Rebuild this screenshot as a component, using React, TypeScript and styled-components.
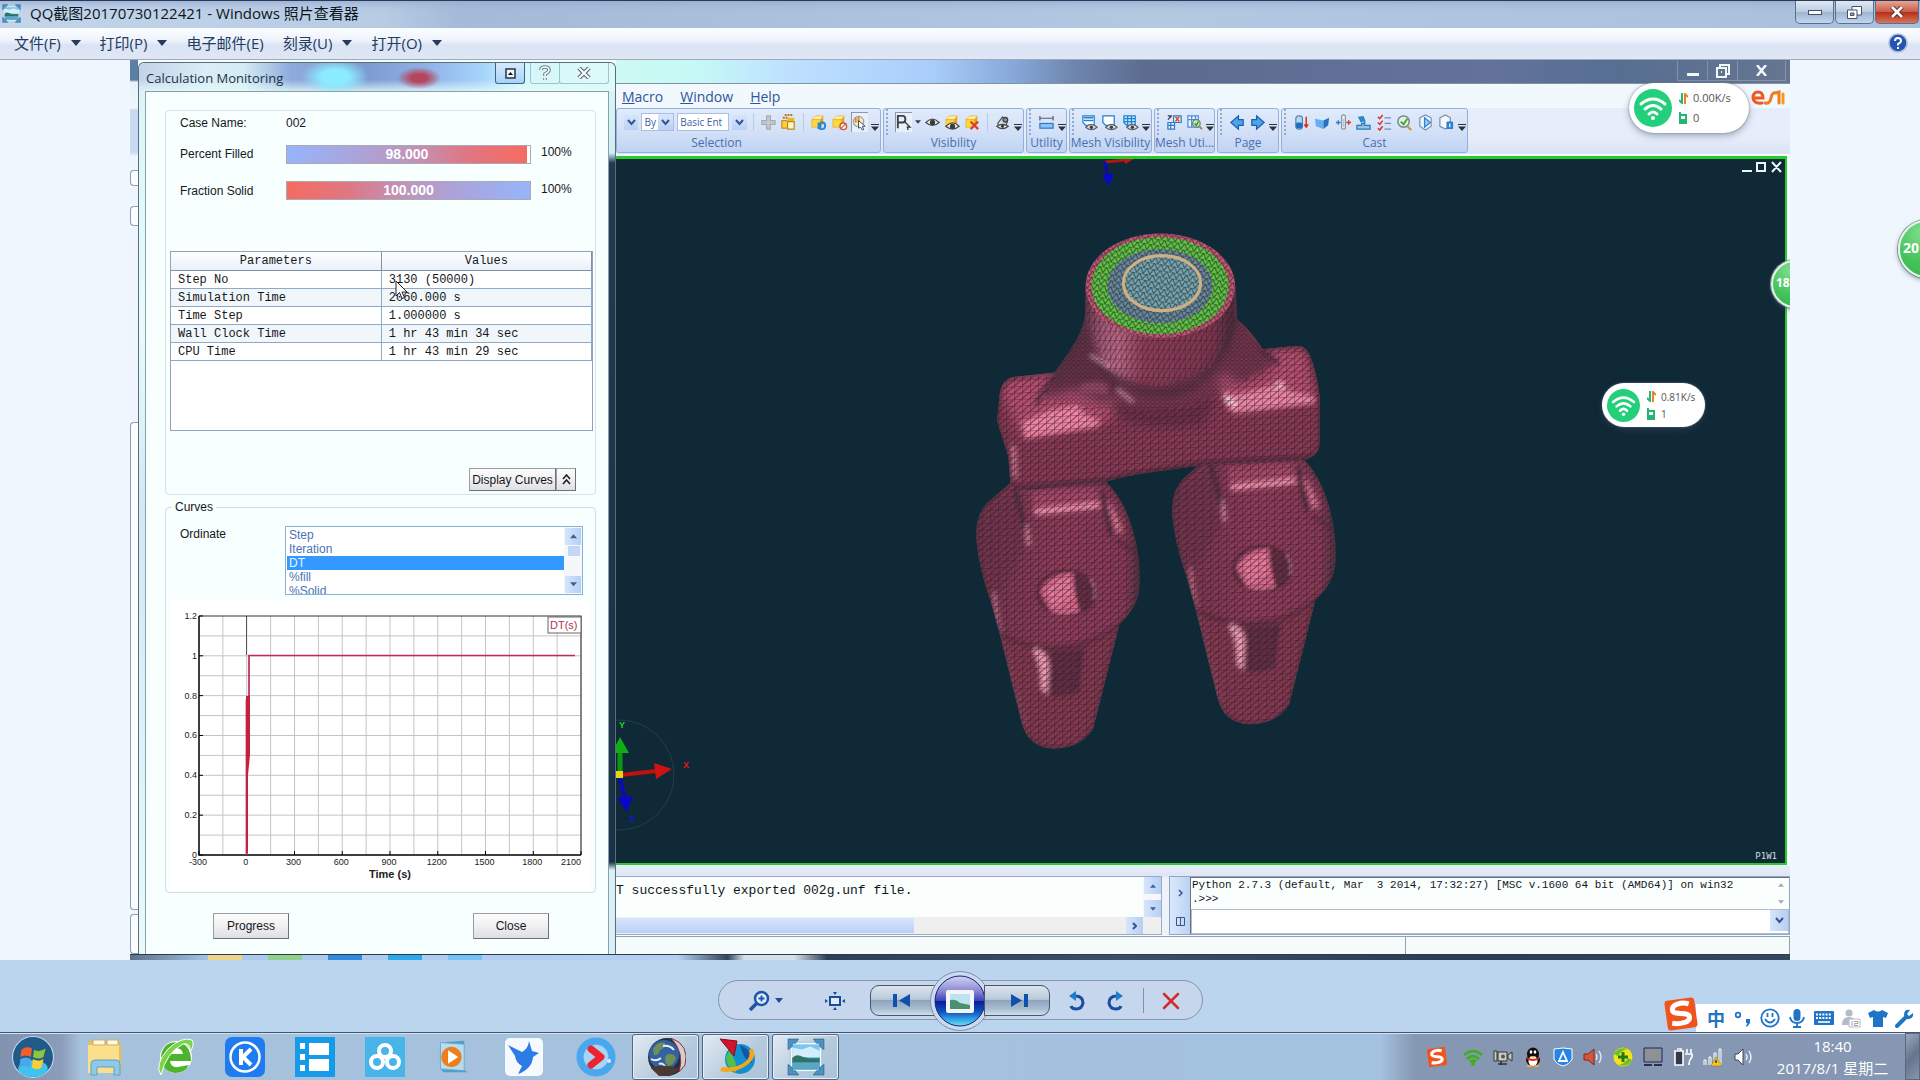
import React from "react";
import styled, { createGlobalStyle } from "styled-components";

const ui = `"Open Sans", "Noto Sans", "Noto Sans CJK SC", sans-serif`;
const arial = `"Liberation Sans", Arial, sans-serif`;
const mono = `"Liberation Mono", "Courier New", monospace`;

const Global = createGlobalStyle`
  *, *::before, *::after { box-sizing: border-box; }
  body { margin: 0; background: #eff6fe; overflow: hidden; }
  button, input, select { font: inherit; color: inherit; margin: 0; padding: 0; border: 0; background: none; border-radius: 0; outline: none; }
  svg { display: block; flex: none; }
`;

const Page = styled.div`
  display: flex;
  flex-direction: column;
  min-height: 100vh;
  font-family: ${ui};
  font-size: 15px;
`;

/* ---------- viewer window chrome ---------- */

const TitleBar = styled.header`
  display: flex;
  align-items: center;
  gap: 9px;
  height: 28px;
  padding: 0 0 3px 2px;
  border-top: 1px solid #2d3852;
  background: linear-gradient(90deg, #c3d5ea 0, #b7cbe3 20%, #a3bbd8 24%, #b3c8e1 60%, #a9c0dc 100%);
  box-shadow: inset 0 8px 8px -6px #94abd0;
`;

const Title = styled.h1`
  flex: 1;
  margin: 0;
  font-size: 15px;
  line-height: 20px;
  font-weight: 400;
  color: #0c1420;
`;

const WinButtons = styled.div`
  display: flex;
  align-self: flex-start;
  gap: 1px;
  padding-right: 1px;
`;

const WinButton = styled.button<{ $close?: boolean }>`
  display: grid;
  place-items: center;
  width: ${(p) => (p.$close ? 44 : 39)}px;
  height: 23px;
  border: 1px solid #5b6f8f;
  border-top: 0;
  border-radius: 0 0 5px 5px;
  background: ${(p) =>
    p.$close
      ? "linear-gradient(#e4a596, #cc5d47 48%, #b5301a 52%, #d6755a)"
      : "linear-gradient(#dde8f4, #bccde2 48%, #9db5d2 52%, #c3d6ec)"};
`;

const MenuBar = styled.nav`
  display: flex;
  align-items: center;
  height: 32px;
  padding: 0 12px 2px 14px;
  border-bottom: 1px solid #a3aabb;
  background: linear-gradient(#fbfdff 0, #eef3fb 40%, #dbe4f4 55%, #dfe7f6 100%);
  color: #233a61;
`;

const MenuItem = styled.button`
  display: flex;
  align-items: center;
  gap: 10px;
  margin-right: 19px;
  line-height: 22px;
`;

const Spacer = styled.div`
  flex: 1;
`;

/* ---------- photo ---------- */

const PhotoArea = styled.main`
  position: relative;
  display: flex;
  flex: 1;
  padding: 0 130px;
  overflow: hidden;
  background: #eff6fe;
`;

const Photo = styled.section`
  position: relative;
  display: flex;
  flex-direction: column;
  flex: 1;
  min-width: 0;
  overflow: hidden;
  background: #f4fdfe;
`;

const PhotoRow = styled.div`
  display: flex;
  flex: 1;
`;

const InnerTaskbar = styled.div`
  display: flex;
  gap: 26px;
  height: 6px;
  padding-left: 78px;
  border-top: 1px solid #2a3b4d;
  background: linear-gradient(90deg, #5b7189 0, #a9c8ea 5%, #b3d0f2 33%, #34465b 36%, #d5dfe9 37%, #d5dfe9 40%, #2c4058 42%, #3a4f68 60%, #2b3c54 80%, #34485f 100%);
`;

const InnerTask = styled.i<{ $c: string }>`
  width: 34px;
  height: 5px;
  background: ${(p) => p.$c};
`;

const LeftEdge = styled.div`
  display: flex;
  flex-direction: column;
  width: 8px;
  background: linear-gradient(#5c7fa8 0, #5c7fa8 20px, #e6f1fb 22px, #f0f6fd 48px, #c7daf1 50px, #c7daf1 92px, #eef5fc 96px);
`;

const EdgePanel = styled.div<{ $h?: number; $mt: number }>`
  margin-top: ${(p) => p.$mt}px;
  height: ${(p) => (p.$h ? `${p.$h}px` : "auto")};
  flex: ${(p) => (p.$h ? "none" : 1)};
  border: 1px solid #8b9db0;
  border-right: 0;
  border-radius: 4px 0 0 4px;
  background: #fbfdff;
`;

/* ---------- dialog ---------- */

const Dialog = styled.section`
  display: flex;
  flex-direction: column;
  width: 478px;
  margin-top: 2px;
  padding: 0 6px;
  border: 1px solid #5a6d7c;
  border-bottom: 0;
  border-radius: 6px 6px 0 0;
  background:
    linear-gradient(#dff7f8 0, #cfeef2 90px, #22394f 100px, #1b3145 calc(100% - 92px), #d9f0f6 calc(100% - 84px)) right / 7px 100% no-repeat,
    linear-gradient(#d9f4f8, #e9fbfb 30%, #cfeaf4 50%, #e8fafa) left / 7px 100% no-repeat,
    #e4fbfb;
  font-family: ${arial};
  font-size: 12px;
  line-height: 16px;
  color: #14181c;
`;

const DialogTitle = styled.header`
  display: flex;
  height: 28px;
  margin: 0 -6px;
  padding: 0 6px;
  border-radius: 6px 6px 0 0;
  background:
    radial-gradient(ellipse 22px 11px at 280px 15px, #b5455e 35%, #b5455e00 100%),
    radial-gradient(ellipse 34px 18px at 196px 14px, #8cecff 40%, #8cecff00 100%),
    linear-gradient(#ffffff00 60%, #e4fafacc),
    linear-gradient(90deg, #c3d2ea 0, #d9eef6 14%, #d5ecf4 22%, #8daadb 32%, #8aa7da 36%, #7d9bd0 48%, #8fb0e6 60%, #a5d4fa 72%, #d4f6fb 80%, #ddfbf7 100%);
`;

const DialogName = styled.h2`
  flex: 1;
  margin: 0;
  padding: 5px 0 0 1px;
  font: 400 13px/20px ${ui};
  color: #1d3246;
`;

const TitleTool = styled.button<{ $w: number; $lit?: boolean }>`
  display: grid;
  place-items: center;
  width: ${(p) => p.$w}px;
  height: 21px;
  border: 1px solid ${(p) => (p.$lit ? "#3b6488" : "#9fc3cb")};
  border-top: 0;
  border-radius: 0 0 3px 3px;
  margin-left: ${(p) => (p.$lit ? 0 : -1)}px;
  margin-right: ${(p) => (p.$lit ? 6 : 0)}px;
  background: ${(p) => (p.$lit ? "linear-gradient(#d5eafc, #a8d2f6)" : "transparent")};
`;

const Client = styled.div`
  display: flex;
  flex-direction: column;
  flex: 1;
  padding: 18px 12px 0 19px;
  border: 1px solid #8aa0a8;
  border-bottom: 0;
  background: #f8ffff;
`;

const Group = styled.div`
  display: flex;
  flex-direction: column;
  height: 385px;
  border: 1px solid #d8e2df;
  border-radius: 4px;
`;

const FormRow = styled.div<{ $h: number }>`
  display: grid;
  grid-template-columns: 106px 245px 1fr;
  align-items: center;
  height: ${(p) => p.$h}px;
  padding-left: 14px;
`;

const Bar = styled.div<{ $reverse?: boolean }>`
  height: 19px;
  padding-right: ${(p) => (p.$reverse ? 0 : 3)}px;
  border: 1px solid #a9a9b4;
  background: #fff;
`;

const BarFill = styled.div<{ $reverse?: boolean }>`
  height: 17px;
  font-weight: 700;
  font-size: 14px;
  line-height: 17px;
  text-align: center;
  color: #fff;
  background: linear-gradient(${(p) => (p.$reverse ? 270 : 90)}deg, #97b4fb 0, #a5a8e4 22%, #bd96be 50%, #df7783 75%, #f76b60 100%);
`;

const Percent = styled.span`
  padding: 0 0 4px 10px;
`;

const TableBox = styled.div`
  height: 180px;
  margin: 43px 2px 0 4px;
  border: 1px solid #8fa3ba;
  background: #fff;
`;

const DataTable = styled.table`
  width: 100%;
  border-collapse: collapse;
  font-family: ${mono};
  font-size: 12px;
  line-height: 16px;
  th, td { height: 18px; padding: 1px 7px 0; border-bottom: 1px solid #8fa9c8; border-right: 1px solid #8fa9c8; text-align: left; }
  th { font-weight: 400; text-align: center; background: linear-gradient(#fff, #e9f0fb); border-color: #7f93a8; }
  th:first-child { width: 50%; }
  tbody tr:nth-child(even) { background: #f0f6f9; }
`;

const SplitButton = styled.div`
  display: flex;
  align-self: flex-end;
  margin: 37px 19px 0 0;
`;

const PushButton = styled.button<{ $w: number; $h: number }>`
  display: grid;
  place-items: center;
  width: ${(p) => p.$w}px;
  height: ${(p) => p.$h}px;
  border: 1px solid #9a9ea2;
  border-right-color: #6d7175;
  border-bottom-color: #6d7175;
  background: linear-gradient(#fcfcfc, #f1f1f2 48%, #dedfe1);
`;

const Fieldset = styled.fieldset`
  min-width: 0;
  margin: 5px 0 0;
  padding: 12px 5px 2px 4px;
  border: 1px solid #d3dddb;
  border-radius: 4px;
`;

const Legend = styled.legend`
  margin-left: 2px;
  padding: 0 3px;
  line-height: 14px;
`;

const OrdinateRow = styled.div`
  display: grid;
  grid-template-columns: 105px 298px;
  padding-left: 10px;
`;

const ListBox = styled.div`
  display: flex;
  height: 69px;
  border: 1px solid #8ab0d4;
  background: #fff;
`;

const ListSelect = styled.select`
  flex: 1;
  height: 67px;
  overflow: hidden;
  scrollbar-width: none;
  padding: 1px 0 0 1px;
  color: #4a74b4;
  option { min-height: 14px; padding: 0 2px; font-size: 12px; line-height: 14px; color: #4a74b4; }
  option:checked { background: #3399ff linear-gradient(#3399ff, #3399ff); -webkit-text-fill-color: #e8f4ff; }
  &::-webkit-scrollbar { display: none; }
`;

const ScrollRail = styled.div`
  display: flex;
  flex-direction: column;
  justify-content: space-between;
  width: 18px;
  padding: 1px;
  background: #f6f7fa;
`;

const ScrollKey = styled.button<{ $w?: number; $h?: number }>`
  display: grid;
  place-items: center;
  width: ${(p) => p.$w ?? 16}px;
  height: ${(p) => p.$h ?? 17}px;
  background: linear-gradient(90deg, #d6e5fb, #b5cff3);
  color: #3f5f94;
`;

const ScrollThumb = styled.div`
  height: 10px;
  margin: 1px 1px auto 3px;
  background: #c3d6f8;
`;

const ChartBox = styled.div`
  margin-top: 5px;
  background: #fff;
  svg { width: 100%; height: auto; }
`;

const DialogActions = styled.div`
  display: flex;
  justify-content: space-between;
  padding: 20px 47px 14px 48px;
`;

/* ---------- meshing application ---------- */

const AppWindow = styled.section`
  display: flex;
  flex-direction: column;
  flex: 1;
  min-width: 0;
`;

const AppTitle = styled.header`
  display: flex;
  justify-content: flex-end;
  height: 24px;
  padding: 1px 4px 0 0;
  border-bottom: 1px solid #8592a5;
  background: linear-gradient(90deg, #cdfaf2 0, #c5f8f6 7%, #bde0ff 15%, #a9cdfa 27%, #86a7d8 34%, #6e86ad 39%, #5c6c90 45%, #62729a 75%, #566f92 85%, #657591 100%);
`;

const AppTitleButton = styled.button<{ $w: number }>`
  display: grid;
  place-items: center;
  width: ${(p) => p.$w}px;
  height: 20px;
  border: 1px solid #8592ab;
  border-top: 0;
  border-left-width: 0;
  &:first-child { border-left-width: 1px; }
`;

const AppMenu = styled.nav`
  display: flex;
  align-items: center;
  justify-content: space-between;
  height: 24px;
  padding: 2px 5px 0 6px;
  background: #f1f8fe;
  color: #2f5596;
`;

const AppMenuList = styled.div`
  display: flex;
  gap: 17px;
`;

const AppMenuItem = styled.button`
  font-size: 14px;
  line-height: 20px;
  &::first-letter { text-decoration: underline; }
`;

const Toolbars = styled.div`
  display: flex;
  gap: 2px;
  height: 46px;
  padding: 0 0 1px;
  background: linear-gradient(#e5eefa, #e7eefb 60%, #dbe4f5);
`;

const ToolGroup = styled.div<{ $w: number }>`
  display: flex;
  flex-direction: column;
  width: ${(p) => p.$w}px;
  border: 1px solid #94afdb;
  border-radius: 3px;
  background: linear-gradient(#e0ebfb, #d2e0f7 55%, #bfd3f3);
`;

const ToolRow = styled.div<{ $grip?: boolean }>`
  display: flex;
  align-items: center;
  gap: 3px;
  height: 26px;
  padding-left: 7px;
  border-left: ${(p) => (p.$grip ? "2px dotted #93a9cf" : "0")};
  margin-left: ${(p) => (p.$grip ? 2 : 0)}px;
`;

const GroupLabel = styled.div<{ $pull?: boolean }>`
  padding-right: ${(p) => (p.$pull ? 64 : 0)}px;
  text-align: center;
  white-space: nowrap;
  font-size: 12px;
  line-height: 16px;
  color: #4a6fae;
`;

const ToolButton = styled.button<{ $on?: boolean }>`
  display: grid;
  place-items: center;
  width: 18px;
  height: 20px;
  box-shadow: ${(p) => (p.$on ? "inset 1px 1px 0 #8a98b2" : "none")};
  background: ${(p) => (p.$on ? "#e9f0fa" : "none")};
`;

const More = styled.button`
  display: grid;
  place-items: center;
  width: 8px;
  height: 8px;
  margin: 10px 1px 0 auto;
`;

const ComboBox = styled.div<{ $w: number }>`
  display: flex;
  align-items: center;
  width: ${(p) => p.$w}px;
  height: 18px;
  border: 1px solid #aac0e2;
  background: #fff;
  font-size: 10px;
  line-height: 16px;
  color: #3c62a5;
  select, input { flex: 1; min-width: 0; height: 16px; padding-left: 2px; appearance: none; }
`;

const DropKey = styled.button`
  display: grid;
  place-items: center;
  width: 15px;
  height: 16px;
  background: linear-gradient(#d9e7fc, #b9d0f4);
`;

const Divider = styled.i`
  width: 1px;
  height: 18px;
  margin: 0 3px;
  background: #bccbe4;
`;

const Viewport = styled.div`
  position: relative;
  flex: 1;
  margin: 2px 3px 0 0;
  border: solid #26cb2e;
  border-width: 3px 2px 2px 0;
  background: #0f2937;
`;

const OnCanvas = styled.div<{ $left?: number; $right?: number; $top?: number; $bottom?: number }>`
  position: absolute;
  left: ${(p) => (p.$left === undefined ? "auto" : `${p.$left}px`)};
  right: ${(p) => (p.$right === undefined ? "auto" : `${p.$right}px`)};
  top: ${(p) => (p.$top === undefined ? "auto" : `${p.$top}px`)};
  bottom: ${(p) => (p.$bottom === undefined ? "auto" : `${p.$bottom}px`)};
`;

const WindowTag = styled.span`
  font: 9px/12px "DejaVu Sans Mono", monospace;
  color: #d5dde2;
`;

const Docks = styled.div`
  display: flex;
  gap: 7px;
  height: 70px;
  padding-top: 11px;
  background: linear-gradient(#e8effa, #dfe5f4 10px, #eef3fa 14px);
`;

const LogPane = styled.div`
  display: flex;
  flex-direction: column;
  width: 546px;
  border: 1px solid #9aabc8;
  border-left: 0;
  background: #fafffe;
`;

const LogBody = styled.div`
  display: flex;
  flex: 1;
  font-family: ${mono};
  font-size: 13px;
  line-height: 28px;
  color: #10151a;
`;

const LogText = styled.div`
  flex: 1;
`;

const LogRail = styled(ScrollRail)`
  padding: 0 0 0 1px;
`;

const HScroll = styled.div`
  display: flex;
  height: 17px;
  padding-right: 18px;
  background: #f0eff0;
`;

const HThumb = styled.div`
  width: 298px;
  margin: 1px 0;
  background: linear-gradient(#d9e6fc, #b9d0f4);
`;

const PyPane = styled.div`
  display: flex;
  flex: 1;
  border: 1px solid #8fa6cb;
`;

const PySide = styled.div`
  display: flex;
  flex-direction: column;
  align-items: center;
  justify-content: space-between;
  width: 20px;
  padding: 12px 0 8px;
  background: linear-gradient(90deg, #dbe8fb, #bcd2f3);
`;

const PyMain = styled.div`
  display: flex;
  flex-direction: column;
  flex: 1;
  min-width: 0;
  border-top: 1px solid #6e6f73;
  border-left: 1px solid #6e6f73;
  background: #fafffe;
`;

const PyOutput = styled.div`
  display: flex;
  justify-content: space-between;
  height: 31px;
  padding: 0 5px 0 1px;
  font-family: ${mono};
  font-size: 11px;
  line-height: 14px;
  white-space: pre;
  color: #14181c;
`;

const PyArrows = styled.div`
  display: flex;
  flex-direction: column;
  justify-content: space-between;
  padding: 5px 0;
  color: #a4a8ae;
`;

const PyInput = styled.div`
  display: flex;
  flex: 1;
  border: 1px solid #b3bcc8;
  background: #fff;
  input { flex: 1; min-width: 0; }
`;

const StatusBar = styled.div`
  display: grid;
  grid-template-columns: 790px 1fr;
  height: 18px;
  margin-top: 1px;
  background: #f5fbfb;
`;

const StatusCell = styled.div`
  border-top: 1px solid #9aa0a8;
  border-right: 1px solid #9aa0a8;
`;

/* ---------- floating widgets ---------- */

const NetPill = styled.div<{ $w: number; $h: number; $top: number; $right: number }>`
  position: absolute;
  top: ${(p) => p.$top}px;
  right: ${(p) => p.$right}px;
  display: flex;
  align-items: center;
  gap: 7px;
  width: ${(p) => p.$w}px;
  height: ${(p) => p.$h}px;
  padding-left: 5px;
  border-radius: 25px;
  background: #fff;
  box-shadow: 0 3px 7px #3c4a6266, 0 0 2px #7788a0;
`;

const NetStats = styled.div<{ $gap: number; $size: number }>`
  display: grid;
  gap: ${(p) => p.$gap}px;
  font: ${(p) => p.$size}px/14px ${ui};
  color: #555;
`;

const NetLine = styled.div`
  display: flex;
  align-items: center;
  gap: 5px;
`;

const Ball = styled.div<{ $size: number; $top: number; $right: number }>`
  position: absolute;
  top: ${(p) => p.$top}px;
  right: ${(p) => p.$right}px;
  width: ${(p) => p.$size}px;
  height: ${(p) => p.$size}px;
  padding-left: 3px;
  border: 2px solid #e8f4ea;
  border-radius: 50%;
  background: radial-gradient(circle at 40% 20%, #7fdc8d, #43c35a 55%, #35b04c);
  box-shadow: 0 2px 5px #45556a99, 0 0 0 1px #8fa79a;
  font: 700 ${(p) => (p.$size > 50 ? 14 : 12)}px/${(p) => p.$size - 6}px ${ui};
  color: #fff;
`;

const Cursor = styled.div`
  position: absolute;
  top: 220px;
  left: 265px;
`;

/* ---------- viewer controls ---------- */

const ControlArea = styled.footer`
  display: grid;
  grid-template-columns: 1fr auto 1fr;
  align-items: center;
  height: 72px;
  background: #bcd5ee;
`;

const Pill = styled.div`
  grid-column: 2;
  display: grid;
  grid-template-columns: 1fr auto 1fr;
  align-items: center;
  width: 485px;
  height: 40px;
  margin-top: 7px;
  border: 1px solid #8695ad;
  border-radius: 20px;
  background: #c5d6ed;
`;

const PillSide = styled.div<{ $end?: boolean }>`
  display: flex;
  align-items: center;
  justify-content: ${(p) => (p.$end ? "flex-start" : "flex-end")};
  gap: ${(p) => (p.$end ? 18 : 42)}px;
  padding: ${(p) => (p.$end ? "0 0 0 17px" : "0 25px 0 0")};
`;

const IconButton = styled.button`
  display: flex;
  align-items: center;
  gap: 5px;
`;

const PillRule = styled.i`
  width: 1px;
  height: 25px;
  background: #8092b0;
`;

const NavGroup = styled.div`
  display: flex;
  align-items: center;
`;

const NavButton = styled.button<{ $next?: boolean }>`
  display: grid;
  place-items: center;
  width: 66px;
  height: 31px;
  border: 1px solid #46566f;
  border-radius: ${(p) => (p.$next ? "0 9px 9px 0" : "9px 0 0 9px")};
  padding: ${(p) => (p.$next ? "0 0 0 4px" : "0 4px 0 0")};
  background: linear-gradient(#dbe4ed, #b9c9da 46%, #8fa5bb 50%, #a9bed2 80%, #cfe0ee);
`;

const PlayRing = styled.button`
  display: grid;
  place-items: center;
  width: 60px;
  height: 60px;
  margin: -10px -6px;
  border: 1px solid #7d8fad;
  border-radius: 50%;
  background: #cbdaf0;
`;

const ImeBar = styled.div`
  grid-column: 3;
  justify-self: end;
  align-self: end;
  display: flex;
  align-items: center;
  gap: 7px;
  height: 28px;
  padding-right: 5px;
  background: #fff;
  color: #1f74c6;
`;

const ImeLogo = styled.div`
  margin: -8px 0 0 -33px;
`;

const ImeKey = styled.button`
  display: grid;
  place-items: center;
  width: 20px;
  height: 24px;
  font: 700 18px/24px "Noto Sans CJK SC", sans-serif;
`;

/* ---------- taskbar ---------- */

const Taskbar = styled.footer`
  display: flex;
  align-items: center;
  height: 48px;
  border-top: 1px solid #44566f;
  box-shadow: inset 0 1px 0 #d4e3f2;
  background: linear-gradient(90deg, #8192b0 0, #8b9dba 62px, #a6c1dc 80px, #a3c2df 1380px, #8597b2 1415px, #8597b2 100%);
`;

const TaskIcon = styled.button<{ $w?: number; $active?: boolean }>`
  display: grid;
  place-items: center;
  width: ${(p) => p.$w ?? 70}px;
  height: 46px;
  border: ${(p) => (p.$active ? "1px solid #52667f" : "0")};
  border-radius: 3px;
  box-shadow: ${(p) => (p.$active ? "inset 0 0 0 1px #e6eef6" : "none")};
  background: ${(p) => (p.$active ? "linear-gradient(135deg, #e3ebf3, #b6cadd 60%, #a9c2da)" : "none")};
`;

const ActiveTasks = styled.div`
  display: flex;
  gap: 3px;
  margin-left: 2px;
`;

const Tray = styled.div`
  display: flex;
  align-items: center;
  gap: 8px;
`;

const TrayIcon = styled.button<{ $wide?: boolean }>`
  display: grid;
  place-items: center;
  width: ${(p) => (p.$wide ? 34 : 22)}px;
  height: 30px;
`;

const Clock = styled.time`
  display: block;
  width: 151px;
  padding-left: 6px;
  text-align: center;
  font-size: 15px;
  line-height: 22px;
  color: #fff;
`;

const ShowDesktop = styled.button`
  width: 15px;
  height: 47px;
  border: 1px solid #5b6a80;
  background: linear-gradient(135deg, #9aa9bd, #66758d 50%, #8795aa);
`;

/* ---------- small glyphs ---------- */

const Tri = ({ w = 10, up = false, c = "currentColor" }: { w?: number; up?: boolean; c?: string }) => (
  <svg width={w} height={w / 2 + 1} viewBox="0 0 10 6">
    <path d={up ? "M0 6L5 0L10 6Z" : "M0 0H10L5 6Z"} fill={c} />
  </svg>
);

const Chevron = () => (
  <svg width="9" height="7" viewBox="0 0 9 7">
    <path d="M1 1L4.500 5L8 1" fill="none" stroke="#35568f" strokeWidth="2" />
  </svg>
);

const MoreMark = () => (
  <More aria-label="More">
    <svg width="8" height="7" viewBox="0 0 8 7">
      <path d="M0 0H8V1H0ZM0 2.500H8L4 7Z" fill="#2d3238" />
    </svg>
  </More>
);

const PhotoGlyph = ({ size }: { size: number }) => (
  <svg width={size} height={size} viewBox="0 0 36 36">
    <rect x="3" y="4" width="30" height="28" fill="#f4fafe" stroke="#a5c3d8" />
    <rect x="5" y="6" width="26" height="24" fill="#7cc5ee" />
    <path d="M5 9L14 11L22 8L31 12V18H5Z" fill="#d3edfa" />
    <path d="M5 19Q8 15 13 17Q19 20 31 19V24H5Z" fill="#2f7468" />
    <path d="M5 23H31V30H5Z" fill="#5aa6c4" />
    {[[0, 0, 0], [36, 0, 90], [36, 36, 180], [0, 36, 270]].map(([x, y, r]) => (
      <path key={r} transform={`translate(${x} ${y}) rotate(${r})`} d="M1 1H11L8 5H5V8L1 11Z" fill="#4a93c4" stroke="#255a83" strokeWidth=".6" />
    ))}
  </svg>
);

const T = ({ children }: { children: React.ReactNode }) => (
  <svg width="17" height="17" viewBox="0 0 18 18" fill="none" strokeWidth="1.300">
    {children}
  </svg>
);

const Cube = ({ a = "#ffd83a", b = "#e8a21b" }: { a?: string; b?: string }) => (
  <>
    <path d="M2 6L6 2H14L11 6Z" fill="#fff0a0" stroke={b} strokeWidth=".6" />
    <path d="M2 6H11V14H2Z" fill={a} stroke={b} strokeWidth=".6" />
    <path d="M11 6L14 2V10L11 14Z" fill={b} />
  </>
);

const Eye = ({ y = 0 }: { y?: number }) => (
  <g transform={`translate(0 ${y})`}>
    <path d="M2 9Q9 2 16 9Q9 15 2 9Z" fill="#f4f4f4" stroke="#4a4a4a" />
    <circle cx="9" cy="9" r="2.800" fill="#3b3b3b" />
  </g>
);

const Grid = ({ hollow = false }: { hollow?: boolean }) => (
  <>
    <path d="M2 2H14V12H5L2 9Z" fill={hollow ? "#fff" : "#c9e8ff"} stroke="#1d80d4" />
    {!hollow && <path d="M2 5H14M2 8H14M6 2V12M10 2V12" stroke="#1d80d4" />}
    <path d="M5 14Q11 8 17 14Q11 19 5 14Z" fill="#e6e6e6" stroke="#5b6470" />
    <circle cx="11" cy="14" r="1.800" fill="#3b3f45" />
  </>
);

const Arrow = ({ left = false }: { left?: boolean }) => (
  <path transform={left ? "matrix(-1 0 0 1 18 0)" : undefined} d="M3 6H8V2L16 9L8 16V12H3Z" fill="#4da3ee" stroke="#1a5fb0" />
);

const glyphs: Record<string, React.ReactNode> = {
  plus: <path d="M7 2H11V7H16V11H11V16H7V11H2V7H7Z" fill="#c4c8ce" stroke="#a8adb5" />,
  cubes: <><path d="M2 7H9V15H2Z" fill="#ffd23a" stroke="#c98f1c" /><path d="M7 7L9 4H15V12L13 14Z" fill="#f1b52a" /><path d="M8 8H15V16H8Z" fill="#fff6c8" stroke="#b98c1d" /><path d="M3 4H8M5 1H13" stroke="#b8731a" strokeWidth="2" strokeDasharray="2 1" /></>,
  cubeId: <><Cube /><path d="M9 9V16M11 9V16H13Q16 16 16 12.500Q16 9 13 9H11" stroke="#2388dd" strokeWidth="2" /></>,
  cubeNo: <><Cube /><circle cx="13" cy="13" r="3.500" fill="#fff" stroke="#cf5a3a" strokeWidth="1.600" /><path d="M10.500 15.500L15.500 10.500" stroke="#cf5a3a" /></>,
  hand: <><circle cx="8" cy="8" r="5.500" fill="#ffe9a8" stroke="#8fa4bd" /><path d="M5 4V9M8 3V9" stroke="#d08a3a" strokeWidth="2" /><path d="M8 7L15 13L12 13L13.500 16.500L12 17L10 14L8 15Z" fill="#fff" stroke="#38485c" strokeWidth="1" /></>,
  eye: <Eye />,
  cubeEye: <><Cube /><Eye y={4} /></>,
  cubeX: <><Cube /><path d="M7 8L15 16M15 8L7 16" stroke="#d9402b" strokeWidth="2.400" /></>,
  gear: <><path d="M4 10L9 3L14 8L12 14L5 14Z" fill="#d8dbdf" stroke="#4f545b" /><circle cx="12" cy="6" r="2.500" fill="#8c9096" stroke="#3d4147" /><path d="M3 13Q9 9 15 13Q9 18 3 13Z" fill="#f1f1f1" stroke="#40454b" /><circle cx="9" cy="13" r="1.600" fill="#333" /></>,
  ruler: <><path d="M2 2V7M16 2V7M2 4.500H16" stroke="#555c66" /><rect x="2" y="10" width="14" height="5" fill="#8cc4f4" stroke="#2c7cc8" /></>,
  meshA: <><Grid hollow /><path d="M3 4H13M3 7H13" stroke="#1d80d4" strokeWidth="1.600" /></>,
  meshB: <Grid hollow />,
  meshC: <Grid />,
  meshSplit: <><path d="M2 9H9V16H2ZM5 9V16M2 12H9M8 2H16V9H8Z" stroke="#2f7ac6" fill="#e9f4ff" /><path d="M10 3L14 8M14 3L10 8" stroke="#e04b2a" strokeWidth="1.600" /><path d="M2 6L6 2M2 2H6" stroke="#333" /></>,
  meshCheck: <><path d="M2 2H13V14H2ZM2 6H13M6 2V14M10 2V14" stroke="#4b8fd0" fill="#eef7ff" /><circle cx="11" cy="10" r="4" fill="#c8eec0" stroke="#6b7682" /><path d="M9 10L11 12L13 8" stroke="#27962a" strokeWidth="1.600" /><path d="M14 13L17 16" stroke="#b4862c" strokeWidth="2" /></>,
  prev: <Arrow left />,
  next: <Arrow />,
  down: <><rect x="3" y="2" width="7" height="14" rx="3" fill="#b7d8f5" stroke="#5684b3" /><rect x="3" y="9" width="7" height="6" rx="2" fill="#1f6fc0" /><path d="M14 3V13M12 11L14 14L16 11" stroke="#dc2d22" strokeWidth="1.600" /></>,
  cube: <><path d="M1 5L8 2L16 4L10 7Z" fill="#d3eaff" /><path d="M1 5L10 7V16L2 13Z" fill="#69aef0" /><path d="M10 7L16 4L15 12L10 16Z" fill="#2a70c0" /></>,
  thermo: <><rect x="7" y="1" width="4" height="15" rx="2" fill="#f5f8fb" stroke="#8594a6" /><path d="M9 5V14" stroke="#b9c4cf" strokeWidth="1.600" /><path d="M1 9H6M3.500 6.500V11.500" stroke="#2b7fd0" strokeWidth="1.600" /><path d="M12 9H17M14.500 6.500V11.500" stroke="#d9402b" strokeWidth="1.600" /></>,
  ladle: <><path d="M2 12H7V10H10V12H16V16H2Z" fill="#8fc6ea" stroke="#2c7ab4" /><path d="M3 3L9 2L11 7L6 9Z" fill="#2d86c4" /><path d="M10 7V11" stroke="#2d86c4" strokeWidth="2" /></>,
  checks: <><path d="M2 3L4 5L7 1M2 9L4 11L7 7M2 15L4 17L7 13" stroke="#d9302a" strokeWidth="1.600" /><path d="M9 4H16M9 10H16M9 16H16" stroke="#6f8fb5" /></>,
  inspect: <><circle cx="8" cy="8" r="6" fill="#e2f5dc" stroke="#79848f" strokeWidth="1.600" /><path d="M5 8L8 11L12 5" stroke="#3ba338" strokeWidth="2" /><path d="M12 13L16 17" stroke="#c99a35" strokeWidth="2.400" /></>,
  play: <><path d="M3 4L9 1L15 4V13L9 17L3 13Z" fill="#eaf5ff" stroke="#7c93ab" /><path d="M8 4L14 9L8 14Z" fill="#9fcdf4" stroke="#2b83d4" /></>,
  info: <><path d="M2 4L8 1L13 4V12L8 16L2 13Z" fill="#f3f8fc" stroke="#7b8fa5" /><rect x="9" y="8" width="7" height="8" rx="1" fill="#2b7fd0" /><path d="M12.500 10V14" stroke="#fff" /></>,
};

const Tool = ({ name, on }: { name: string; on?: boolean }) => (
  <ToolButton $on={on} aria-label={name}>
    <T>{glyphs[name]}</T>
  </ToolButton>
);

const Tools = ({ label, w, names }: { label: string; w: number; names: string[] }) => (
  <ToolGroup $w={w}>
    <ToolRow $grip>
      {names.map((n) => <Tool key={n} name={n} />)}
      <MoreMark />
    </ToolRow>
    <GroupLabel>{label}</GroupLabel>
  </ToolGroup>
);

/* ---------- chart ---------- */

const Chart = () => {
  const x = (i: number) => 199 + i * 23.875;
  const y = (i: number) => 855 - i * 19.92;
  return (
    <ChartBox>
      <svg viewBox="170 600 420 290" role="img" aria-label="DT against time" fontFamily={arial} fontSize="9" fill="#222">
        {Array.from({ length: 15 }, (_, i) => <path key={i} d={`M${x(i + 1)} 616V855`} stroke="#c4c4c6" />)}
        {Array.from({ length: 11 }, (_, i) => <path key={i} d={`M199 ${y(i + 1)}H581`} stroke="#c4c4c6" />)}
        <path d="M246.500 616V655" stroke="#555" />
        <path d="M199 616H581V855" fill="none" stroke="#333" strokeWidth="1.200" />
        <path d="M199 616V855H581" fill="none" stroke="#000" strokeWidth="1.500" />
        {["0", "0.2", "0.4", "0.6", "0.8", "1", "1.2"].map((t, i) => (
          <g key={t}>
            <path d={`M199 ${y(i * 2)}h4`} stroke="#000" />
            <text x="197" y={y(i * 2) + 3} textAnchor="end">{t}</text>
          </g>
        ))}
        {[-300, 0, 300, 600, 900, 1200, 1500, 1800, 2100].map((t, i) => (
          <g key={t}>
            <path d={`M${x(i * 2)} 855v-4`} stroke="#000" />
            <text x={i === 8 ? 571 : x(i * 2) - 1} y="865" textAnchor="middle">{t}</text>
          </g>
        ))}
        <path d="M246.500 855V700L249 696V655.500H575" fill="none" stroke="#bf2c50" strokeWidth="1.700" />
        <path d="M246 853V696H250V755L248 775V853Z" fill="#c51f42" />
        <rect x="548" y="617" width="33" height="16" fill="#fff" stroke="#666" />
        <text x="550" y="629" fontSize="11" fill="#b5304e">DT(s)</text>
        <text x="390" y="878" fontSize="11" fontWeight="700" textAnchor="middle">Time (s)</text>
      </svg>
    </ChartBox>
  );
};

/* ---------- casting model ---------- */

const legOutline =
  "M180 765L110 822Q74 858 79 925Q88 1010 122 1095L150 1190L215 1435Q235 1506 312 1508Q398 1506 430 1450L508 1160Q566 1110 568 1055Q573 975 548 895Q524 815 470 762Z";

const Leg = ({ dx, dy }: { dx: number; dy: number }) => (
  <g transform={`translate(${dx} ${dy})`}>
    <path d={legOutline} fill="url(#legShade)" />
    <g clipPath="url(#legClip)">
      <g filter="url(#soft)">
        <path d="M78 900L120 840L185 790L225 950L140 1080Z" fill="#6f3249" opacity=".7" />
        <path d="M140 1170Q240 1235 340 1222Q440 1215 515 1155L520 1180L430 1460L310 1510L230 1480Z" fill="#84384f" />
        <path d="M132 1070L152 1190L230 1480" stroke="#d9819c" strokeWidth="8" fill="none" />
        <path d="M472 810Q500 850 520 900L500 905L478 840Z" fill="#e07c99" />
        <path d="M228 880L238 940" stroke="#d88aa2" strokeWidth="12" />
        <path d="M195 780L225 900M457 790L483 910" stroke="#2d2530" strokeWidth="9" />
        <path d="M245 790L440 780L455 835L250 850Z" fill="#a84a69" />
        <path d="M255 846L448 826" stroke="#f792ae" strokeWidth="18" />
        <path d="M150 1188Q240 1236 340 1223Q440 1216 515 1155" stroke="#3a2330" strokeWidth="6" fill="none" />
        <path d="M300 1235L402 1228L382 1350Q340 1368 298 1360Z" fill="#622e42" />
        <path d="M256 1225Q296 1238 298 1280L293 1358L272 1340Q274 1270 248 1235Z" fill="#f09cb4" />
        <path d="M403 1228Q385 1260 383 1350" stroke="#43283a" strokeWidth="6" fill="none" />
        <path d="M500 925Q530 945 560 960" stroke="#4f2a3b" strokeWidth="7" fill="none" />
        <path d={legOutline} fill="none" stroke="#50303d" strokeWidth="9" />
      </g>
      <g filter="url(#softer)">
        <ellipse cx="350" cy="1072" rx="88" ry="62" fill="#7a344c" stroke="#4c2838" strokeWidth="5" />
        <path d="M270 1068Q298 1014 370 1015Q372 1080 390 1124Q335 1144 300 1122Z" fill="#d9688a" />
        <path d="M290 1062Q320 1030 360 1030L372 1085L310 1115Z" fill="#e87999" />
        <path d="M376 1017Q438 1036 434 1078Q420 1112 394 1124Q374 1080 376 1017Z" fill="#652d43" />
        <path d="M420 1034Q442 1052 432 1090" fill="none" stroke="#d694a8" strokeWidth="4" />
      </g>
    </g>
    <path d={legOutline} fill="url(#mesh)" />
  </g>
);

const bodyOutline =
  "M407 212L407 285C402 345 360 395 315 455L195 467Q157 470 149 515L141 590L175 690L181 765Q195 787 245 783L470 760C550 738 640 730 780 712L1060 700Q1106 690 1109 655L1109 520Q1095 425 1070 392Q1060 379 1035 381L938 390C905 340 880 322 860 305L857 212Z";

const Model = () => (
  <svg width="420" height="560" viewBox="0 0 1260 1568" preserveAspectRatio="none" role="img" aria-label="Meshed casting">
    <defs>
      <pattern id="mesh" width="24" height="18" patternUnits="userSpaceOnUse" patternTransform="skewY(-3)">
        <path d="M0 0H24M0 0V18M0 18L24 0" stroke="#2a1b27" strokeWidth="2.600" fill="none" opacity=".72" />
      </pattern>
      <pattern id="meshFine" width="14" height="12" patternUnits="userSpaceOnUse">
        <path d="M0 0H14M0 12L7 0L14 12" stroke="#26202a" strokeWidth="2.400" fill="none" opacity=".8" />
      </pattern>
      <pattern id="meshCap" width="20" height="17" patternUnits="userSpaceOnUse" patternTransform="rotate(9)">
        <path d="M0 0H20M0 17L10 0L20 17" stroke="#1e2a2c" strokeWidth="2.800" fill="none" opacity=".75" />
      </pattern>
      <pattern id="meshTall" width="16" height="26" patternUnits="userSpaceOnUse">
        <path d="M0 0H16M0 0V26M0 26L16 0" stroke="#2a1b27" strokeWidth="2.600" fill="none" opacity=".7" />
      </pattern>
      <linearGradient id="legShade" x1="0" x2="1">
        <stop offset="0" stopColor="#74354b" />
        <stop offset=".5" stopColor="#913c59" />
        <stop offset=".9" stopColor="#8b3a56" />
        <stop offset="1" stopColor="#5a3444" />
      </linearGradient>
      <linearGradient id="neck" x1="0" x2="1">
        <stop offset="0" stopColor="#6d3a4d" />
        <stop offset=".12" stopColor="#a8597a" />
        <stop offset=".22" stopColor="#bb6884" />
        <stop offset=".38" stopColor="#8f3d58" />
        <stop offset=".85" stopColor="#7d354d" />
        <stop offset="1" stopColor="#4b2b38" />
      </linearGradient>
      <filter id="soft" x="-10%" y="-10%" width="120%" height="120%">
        <feGaussianBlur stdDeviation="6" />
      </filter>
      <filter id="softer" x="-10%" y="-10%" width="120%" height="120%">
        <feGaussianBlur stdDeviation="4" />
      </filter>
      <filter id="wide" x="-20%" y="-20%" width="140%" height="140%">
        <feGaussianBlur stdDeviation="14" />
      </filter>
      <clipPath id="bodyClip">
        <path d={bodyOutline} />
      </clipPath>
      <clipPath id="legClip">
        <path d={legOutline} />
      </clipPath>
    </defs>
    <Leg dx={0} dy={0} />
    <Leg dx={588} dy={-68} />
    <path d={bodyOutline} fill="#883953" />
    <g clipPath="url(#bodyClip)">
      <g filter="url(#wide)">
        <path d="M148 500L195 467L320 460L500 500L480 590L220 640Z" fill="#b8506f" />
        <path d="M800 470L960 390L1065 390L1095 530L850 570Z" fill="#b8506f" />
        <path d="M350 380L420 320L520 500L460 540L380 500L270 530Z" fill="#6c3147" />
        <path d="M865 320L980 430L940 460L870 490L820 450Z" fill="#7a364d" />
        <path d="M480 540Q640 580 800 520L760 600Q640 620 520 590Z" fill="#6b2f44" />
      </g>
      <g filter="url(#soft)">
        <path d="M215 595L300 560L385 545L400 570L455 590L440 608L225 640Z" fill="#f384a3" />
        <path d="M390 490Q430 470 480 490L470 520Q430 510 390 520Z" fill="#a24b68" />
        <path d="M815 500Q830 520 870 515Q950 500 1000 475L1012 505L1095 522L1095 542L850 568Q815 545 815 500Z" fill="#ee86a4" />
        <path d="M828 525L858 548" stroke="#fbd3dd" strokeWidth="14" />
        <path d="M986 478L992 500" stroke="#fbd3dd" strokeWidth="10" />
        <path d="M190 660L194 750" stroke="#cf7c95" strokeWidth="16" />
        <path d="M935 395L985 430" stroke="#3a2430" strokeWidth="9" />
        <path d="M258 545Q285 490 325 462" stroke="#5d3044" strokeWidth="12" fill="none" />
        <path d="M180 780L470 757C560 737 640 727 780 708L1100 692" stroke="#4a2636" strokeWidth="8" fill="none" />
      </g>
      <path d="M407 212V290Q420 400 490 470Q540 520 610 525Q700 515 770 460Q850 390 857 300V212Z" fill="url(#neck)" filter="url(#soft)" />
      <g filter="url(#wide)">
        <path d="M855 290Q850 380 780 455Q730 500 650 520" stroke="#42293a" strokeWidth="14" fill="none" />
        <path d="M490 470Q600 540 740 490" stroke="#572a3c" strokeWidth="26" fill="none" />
        <path d="M404 300Q390 370 340 430" stroke="#54303f" strokeWidth="14" fill="none" />
      </g>
      <g filter="url(#soft)">
        <path d="M420 405L480 440M500 500L550 538" stroke="#d38aa2" strokeWidth="13" fill="none" />
        <path d="M445 430L500 475" stroke="#3b2733" strokeWidth="7" />
        <path d={bodyOutline} fill="none" stroke="#50303d" strokeWidth="8" />
      </g>
      <path d="M407 212V300L480 460L620 500L790 440L857 300V212Z" fill="url(#meshTall)" />
      <path d="M315 455L407 300L480 460L620 500L790 440L857 300L970 430L800 520L640 560L480 560L280 530Z" fill="url(#meshFine)" opacity=".8" />
      <path d="M141 467H315L280 530L480 560L640 560L800 520L970 430L930 380H1110V790H141Z" fill="url(#mesh)" />
    </g>
    <ellipse cx="631" cy="212" rx="224" ry="146" fill="#cc5475" />
    <ellipse cx="630" cy="212" rx="206" ry="136" fill="#61c440" />
    <ellipse cx="630" cy="213" rx="158" ry="104" fill="#6a879d" />
    <ellipse cx="636" cy="205" rx="116" ry="77" fill="#76a5b1" />
    <ellipse cx="631" cy="212" rx="224" ry="146" fill="url(#meshCap)" />
    <ellipse cx="636" cy="205" rx="116" ry="77" fill="none" stroke="#cfb083" strokeWidth="9" />
  </svg>
);

const Triad = () => (
  <svg width="90" height="150" viewBox="616 712 90 150" fontFamily={arial} fontSize="9" fontWeight="700">
    <circle cx="619" cy="775" r="55" fill="none" stroke="#233f4f" />
    <path d="M620 773V748" stroke="#0a9a12" strokeWidth="5" />
    <path d="M612 753L620 737L629 753Z" fill="#0fae16" />
    <path d="M621 775L656 771" stroke="#c01010" strokeWidth="4" />
    <path d="M654 763L672 769L656 779Z" fill="#cf1212" />
    <path d="M620 778L625 800" stroke="#0b0bb5" strokeWidth="4" />
    <path d="M617 798L633 796L627 812Z" fill="#0808c4" />
    <rect x="616" y="771" width="7" height="7" fill="#e8d51a" />
    <text x="619" y="728" fill="#21d321">Y</text>
    <text x="683" y="768" fill="#e01515">X</text>
    <text x="629" y="822" fill="#1515d8">Z</text>
  </svg>
);

/* ---------- network pill ---------- */

const Wifi = ({ size }: { size: number }) => (
  <svg width={size} height={size} viewBox="0 0 38 38" fill="none" stroke="#fff" strokeWidth="3" strokeLinecap="round">
    <circle cx="19" cy="19" r="19" fill="#24cf7c" stroke="none" />
    <path d="M7 15Q19 5 31 15M11 20Q19 13 27 20M15 25Q19 21 23 25" />
    <circle cx="19" cy="29" r="2" fill="#fff" stroke="none" />
  </svg>
);

const Net = (p: { w: number; h: number; top: number; right: number; rate: string; count: string; size: number; gap: number; icon: number }) => (
  <NetPill $w={p.w} $h={p.h} $top={p.top} $right={p.right}>
    <Wifi size={p.icon} />
    <NetStats $gap={p.gap} $size={p.size}>
      <NetLine>
        <svg width="9" height="11" viewBox="0 0 9 11" fill="none" strokeWidth="2">
          <path d="M3 0V10L0 7" stroke="#2bb573" />
          <path d="M6 11V1L9 4" stroke="#e8832a" />
        </svg>
        {p.rate}
      </NetLine>
      <NetLine>
        <svg width="9" height="12" viewBox="0 0 9 12">
          <path d="M0 0H2V2H8V12H0Z" fill="#24b573" />
          <path d="M2 4H6V7H2Z" fill="#fff" />
        </svg>
        {p.count}
      </NetLine>
    </NetStats>
  </NetPill>
);

const SogouLogo = ({ size, tilt = -8 }: { size: number; tilt?: number }) => (
  <svg width={size} height={size} viewBox="0 0 36 36">
    <g transform={`rotate(${tilt} 18 18)`}>
      <rect x="3" y="3" width="30" height="30" rx="3" fill="#f0531c" />
      <path d="M27 9C20 6 10 7 10 13C10 19 26 16 26 22C26 28 15 28 8 26" fill="none" stroke="#fff" strokeWidth="5" />
    </g>
  </svg>
);

/* ---------- taskbar glyphs ---------- */

const B = ({ children, s = 40 }: { children: React.ReactNode; s?: number }) => (
  <svg width={s} height={s} viewBox="0 0 40 40">{children}</svg>
);

const pinned: [string, number, React.ReactNode][] = [
  ["Start", 66, <B s={42}><circle cx="20" cy="20" r="19.500" fill="#215a86" stroke="#c3dcec" /><ellipse cx="20" cy="31" rx="14" ry="8" fill="#3fc4ee" /><path d="M9 13Q14 9 19 12L18 20Q13 17 8 20Z" fill="#f0602a" /><path d="M21 13Q26 16 32 12L30 20Q25 23 20 20Z" fill="#8cc63f" /><path d="M8 22Q13 19 18 22L17 30Q12 27 7 30Z" fill="#4aa7ea" /><path d="M20 22Q25 25 30 22L28 30Q24 33 19 30Z" fill="#ffce2e" /></B>],
  ["Explorer", 78, <B><path d="M4 4H14L16 7H36V36H4Z" fill="#e9bd4f" /><path d="M3 8H34V36H3Z" fill="#fbe08c" /><path d="M8 3H20V8H8ZM22 3H33V8H22Z" fill="#fffbe8" stroke="#d8a948" /><path d="M6 38V27Q6 23 10 23H31Q35 23 35 27V38H29V30H12V38Z" fill="#8ec9e8" stroke="#5aa0c8" /></B>],
  ["Browser", 64, <B><circle cx="20" cy="20" r="16" fill="#fff" /><path d="M35 24H14Q15 31 22 30L33 28Q29 36 19 36Q5 34 5 20Q6 6 20 5Q35 6 35 24ZM14 17H27Q26 11 20 11Q15 12 14 17Z" fill="#4cb52c" /><path d="M5 38Q-2 28 12 12Q26 -1 36 3Q39 8 34 15Q35 5 27 7Q10 16 5 38Z" fill="#7bd34a" stroke="#fff" /></B>],
  ["K", 74, <B><rect width="40" height="40" rx="7" fill="#1f7cf0" /><circle cx="20" cy="20" r="14.500" fill="none" stroke="#fff" strokeWidth="2.500" /><path d="M16 12V28M26 12L18 20L26 28" stroke="#fff" strokeWidth="4" fill="none" /></B>],
  ["Tiles", 66, <B><rect width="40" height="40" fill="#159be9" /><path d="M5 6H10V12H5ZM5 17H10V23H5ZM5 28H10V34H5ZM14 6H34V18H14ZM14 22H34V34H14Z" fill="#fff" /></B>],
  ["Cloud", 74, <B><rect width="40" height="40" fill="#47b4ea" /><g fill="none" stroke="#fff" strokeWidth="4"><circle cx="20" cy="14" r="6" /><circle cx="12" cy="25" r="6" /><circle cx="28" cy="25" r="6" /></g></B>],
  ["Player", 64, <B s={34}><path d="M4 3L32 1V35L36 38H8L4 34Z" fill="#4f9fc9" /><path d="M4 3L32 5V36L4 34Z" fill="#b6dcf0" stroke="#67a8cc" /><circle cx="17" cy="20" r="12" fill="#ef7d1c" /><path d="M13 12L25 20L13 28Z" fill="#fff" /></B>],
  ["Bird", 76, <B><rect x="1" y="1" width="38" height="38" rx="5" fill="#f6fafe" /><path d="M4 8L18 15Q24 12 25 4L28 14L35 16L29 20Q28 32 14 37L18 29Q12 26 11 19Z" fill="#2d7be5" /></B>],
  ["Video", 68, <B><circle cx="20" cy="20" r="16" fill="none" stroke="#47a8ef" strokeWidth="7" /><circle cx="20" cy="20" r="12" fill="#a9d5f5" /><path d="M15 12L25 20L15 28" fill="none" stroke="#ec2430" strokeWidth="7" strokeLinecap="round" strokeLinejoin="round" /><circle cx="33" cy="24" r="2" fill="#d9efff" /></B>],
];

const running: [string, React.ReactNode][] = [
  ["Earth", <B><circle cx="21" cy="20" r="19" fill="#23303f" /><path d="M25 1Q44 8 39 28L33 35Q39 16 25 1Z" fill="#cfd0d2" stroke="#9b3434" /><circle cx="18" cy="18" r="15" fill="#34619f" /><path d="M7 12Q12 4 19 6Q20 11 14 13Q13 19 8 18ZM20 18Q27 15 30 21Q27 29 22 29Q17 24 20 18Z" fill="#6f8f58" /><path d="M5 22Q10 25 15 21M17 9Q24 8 28 13M13 27Q17 25 20 31" stroke="#e7f0f8" strokeWidth="2" fill="none" /><path d="M5 31Q18 26 34 32L24 39H13Z" fill="#4a3932" /></B>],
  ["Cast", <B><circle cx="24" cy="22" r="15" fill="#128fcf" /><path d="M13 14Q22 24 20 36Q10 30 10 20Z" fill="#4fc04a" /><path d="M24 8Q36 12 36 26Q28 24 24 8Z" fill="#1456a8" /><path d="M37 12Q42 22 28 30Q16 37 4 34L6 30Q20 32 29 25Q35 20 33 13Z" fill="#f4a61e" /><path d="M4 2L21 4L18 19Z" fill="#d3122b" stroke="#8a0d1d" /></B>],
  ["Photo viewer", <PhotoGlyph size={38} />],
];

const V = ({ children, w = 20 }: { children: React.ReactNode; w?: number }) => (
  <svg width={w} height="20" viewBox="0 0 20 20" fill="none">{children}</svg>
);

const tray: [string, React.ReactNode][] = [
  ["Wireless", <V><g stroke="#3fae1f" strokeWidth="2.600"><path d="M1 8Q10 0 19 8M4 12Q10 6 16 12M7 15Q10 12 13 15" /></g><circle cx="10" cy="17" r="2" fill="#3fae1f" /></V>],
  ["Camera", <V><path d="M1 4H4V14H1ZM5 5H14V14H5ZM15 8L19 5V14L15 11Z" fill="#c9ccc2" stroke="#30342f" /><path d="M5 17H14M8 14V18" stroke="#30342f" strokeWidth="1.600" /><circle cx="10" cy="9.500" r="2" fill="#555" /></V>],
  ["QQ", <V><ellipse cx="10" cy="7" rx="6" ry="6.500" fill="#111" /><ellipse cx="10" cy="13" rx="7" ry="6" fill="#111" /><ellipse cx="10" cy="14" rx="4.500" ry="5" fill="#fff" /><path d="M4 10Q10 14 16 10V12Q10 16 4 12Z" fill="#e0231e" /><ellipse cx="8" cy="5" rx="1.300" ry="1.800" fill="#fff" /><ellipse cx="12" cy="5" rx="1.300" ry="1.800" fill="#fff" /><path d="M7 9H13L10 11ZM4 18H9V20H4ZM11 18H16V20H11Z" fill="#f7a51b" /></V>],
  ["Shield", <V><path d="M1 2L10 1L19 2V12Q17 17 10 19Q3 17 1 12Z" fill="#2584e4" stroke="#fff" /><path d="M10 5L14 14H6Z" stroke="#fff" strokeWidth="1.800" /></V>],
  ["Audio", <V><path d="M1 7H5L11 2V18L5 13H1Z" fill="#d5553d" stroke="#7d2a1b" /><path d="M13 7Q15 10 13 13M16 4Q20 10 16 16" stroke="#e9edf2" strokeWidth="1.300" /></V>],
  ["Guard", <V><circle cx="10" cy="10" r="9.500" fill="#f3e21d" /><path d="M1 7Q5 -1 15 2Q8 3 5 9ZM19 13Q15 21 5 18Q12 17 15 11Z" fill="#6cc02a" /><path d="M10 5V15M5 10H15" stroke="#1e7b17" strokeWidth="3" /></V>],
  ["Display", <V><path d="M1 1H19V15H1Z" fill="#8f9195" stroke="#1a2468" /><path d="M1 18H9M11 18H19" stroke="#2a2f52" strokeWidth="2" /></V>],
  ["Power", <V><path d="M2 4H10V18H2ZM4 2H8V4" stroke="#fff" strokeWidth="1.600" fill="#33394a" /><path d="M14 2V6M18 2V6M12 7H19V10Q16 13 16 18" stroke="#fff" strokeWidth="1.600" /></V>],
  ["Signal", <V><path d="M1 18V13H3V18M6 18V10H8V18M11 18V6H13V18M16 18V2H18V18" stroke="#fff" /><path d="M13 10L19 19H8Z" fill="#f7c522" stroke="#9b7a10" strokeWidth=".6" /><path d="M13 13V16" stroke="#222" strokeWidth="1.300" /></V>],
  ["Volume", <V><path d="M2 7H5L10 2V18L5 13H2Z" fill="#fff" stroke="#3c4557" /><path d="M13 7Q15 10 13 13M16 4Q20 10 16 16" stroke="#f5f7fa" strokeWidth="1.300" /></V>],
];

const ime: [string, React.ReactNode][] = [
  ["Chinese", "中"],
  ["Punctuation", <V><circle cx="5" cy="7" r="2.300" stroke="#1f74c6" strokeWidth="1.800" /><path d="M13 11H17V15L14 19L13 18L14.500 15H13Z" fill="#1f74c6" /></V>],
  ["Emoji", <V><g stroke="#1f74c6" strokeWidth="1.800"><circle cx="10" cy="10" r="8.700" /><path d="M5 11Q10 18 15 11M7.500 5V9M12.500 5V9" /></g></V>],
  ["Voice", <V><rect x="6.500" y="1" width="7" height="12" rx="3.500" fill="#1f74c6" /><path d="M3 9Q4 15 10 15Q16 15 17 9M10 15V19M6 19H14" stroke="#1f74c6" strokeWidth="1.800" /></V>],
  ["Keyboard", <V><rect y="3" width="20" height="14" rx="1" fill="#1f74c6" /><path d="M2 6.500H18M2 10H18" stroke="#fff" strokeWidth="1.800" strokeDasharray="2 1.200" /><path d="M4 14H16" stroke="#fff" strokeWidth="1.600" /></V>],
  ["Account", <V><circle cx="8" cy="5" r="3.600" fill="#b4bcc6" /><path d="M1 17Q1 9 8 9Q13 9 14 13V17Z" fill="#b4bcc6" /><path d="M8 11H19V19H8Z" fill="#fff" stroke="#b4bcc6" /><path d="M11 13V18M13 13.500H17V15.500H13.500V17.500H17" stroke="#9aa4b0" /></V>],
  ["Skin", <V><path d="M6 2Q10 5 14 2L20 5L18 10L15 9V19H5V9L2 10L0 5Z" fill="#1f74c6" /></V>],
  ["Settings", <V><path d="M2 18L11 9" stroke="#1f74c6" strokeWidth="4" strokeLinecap="round" /><path d="M18 5L14 8L12 6L15 2Q9 1 9 7Q10 12 14 11Q19 10 18 5Z" fill="#1f74c6" /></V>],
];

const rows = [
  ["Step No", "3130 (50000)"],
  ["Simulation Time", "2060.000 s"],
  ["Time Step", "1.000000 s"],
  ["Wall Clock Time", "1 hr 43 min 34 sec"],
  ["CPU Time", "1 hr 43 min 29 sec"],
];

const CalculationDialog = () => (
  <Dialog aria-label="Calculation Monitoring">
    <DialogTitle>
      <DialogName>Calculation Monitoring</DialogName>
      <TitleTool $w={30} $lit aria-label="Roll up">
        <svg width="11" height="11" viewBox="0 0 11 11"><rect x="1" y="1" width="9" height="9" fill="#eef6fc" stroke="#24343f" strokeWidth="1.500" /><path d="M3 7L5.500 4L8 7Z" fill="#111" /></svg>
      </TitleTool>
      <TitleTool $w={30} aria-label="Help">
        <svg width="12" height="16" viewBox="0 0 12 16" fill="none"><path d="M2 5Q2 2 6 2Q10 2 10 5Q10 7 6 9V11M6 13V15" stroke="#6d7f86" strokeWidth="3.600" /><path d="M2 5Q2 2 6 2Q10 2 10 5Q10 7 6 9V11M6 13V15" stroke="#fff" strokeWidth="1.500" /></svg>
      </TitleTool>
      <TitleTool $w={50} aria-label="Close dialog">
        <svg width="14" height="12" viewBox="0 0 14 12" fill="none"><path d="M2 1L12 11M12 1L2 11" stroke="#5d6f76" strokeWidth="4.400" /><path d="M2 1L12 11M12 1L2 11" stroke="#fff" strokeWidth="2" /></svg>
      </TitleTool>
    </DialogTitle>
    <Client>
      <Group>
        <FormRow $h={24}><span>Case Name:</span><span>002</span></FormRow>
        <FormRow $h={38}>
          <span>Percent Filled</span>
          <Bar><BarFill>98.000</BarFill></Bar>
          <Percent>100%</Percent>
        </FormRow>
        <FormRow $h={35}>
          <span>Fraction Solid</span>
          <Bar $reverse><BarFill $reverse>100.000</BarFill></Bar>
          <Percent>100%</Percent>
        </FormRow>
        <TableBox>
          <DataTable>
            <thead><tr><th>Parameters</th><th>Values</th></tr></thead>
            <tbody>{rows.map(([a, b]) => <tr key={a}><td>{a}</td><td>{b}</td></tr>)}</tbody>
          </DataTable>
        </TableBox>
        <SplitButton>
          <PushButton $w={87} $h={23}>Display Curves</PushButton>
          <PushButton $w={20} $h={23} aria-label="Collapse curves">
            <svg width="9" height="11" viewBox="0 0 9 11" fill="none" stroke="#222" strokeWidth="1.600"><path d="M1 5L4.500 1L8 5M1 10L4.500 6L8 10" /></svg>
          </PushButton>
        </SplitButton>
      </Group>
      <Fieldset>
        <Legend>Curves</Legend>
        <OrdinateRow>
          <label htmlFor="ordinate">Ordinate</label>
          <ListBox>
            <ListSelect id="ordinate" size={4} defaultValue="DT">
              {["Step", "Iteration", "DT", "%fill", "%Solid"].map((o) => <option key={o}>{o}</option>)}
            </ListSelect>
            <ScrollRail>
              <ScrollKey aria-label="Scroll up"><Tri w={7} up /></ScrollKey>
              <ScrollThumb />
              <ScrollKey aria-label="Scroll down"><Tri w={7} /></ScrollKey>
            </ScrollRail>
          </ListBox>
        </OrdinateRow>
        <Chart />
      </Fieldset>
      <DialogActions>
        <PushButton $w={76} $h={26}>Progress</PushButton>
        <PushButton $w={76} $h={26}>Close</PushButton>
      </DialogActions>
    </Client>
  </Dialog>
);

const MeshApp = () => (
  <AppWindow>
    <AppTitle>
      <AppTitleButton $w={31} aria-label="Minimize application"><svg width="12" height="10"><path d="M0 8.500H12" stroke="#f4f7fa" strokeWidth="3" /></svg></AppTitleButton>
      <AppTitleButton $w={30} aria-label="Restore application"><svg width="14" height="14" fill="none" stroke="#f4f7fa" strokeWidth="2"><path d="M1 4H10V13H1ZM4 4V1H13V10H10M5 8H6" /></svg></AppTitleButton>
      <AppTitleButton $w={48} aria-label="Close application"><svg width="11" height="11"><path d="M1 0L10 11M10 0L1 11" stroke="#f4f7fa" strokeWidth="2.500" /></svg></AppTitleButton>
    </AppTitle>
    <AppMenu>
      <AppMenuList>
        {["Macro", "Window", "Help"].map((m) => <AppMenuItem key={m}>{m}</AppMenuItem>)}
      </AppMenuList>
      <svg width="34" height="17" viewBox="0 0 34 17" fill="none" strokeWidth="3" strokeLinecap="round">
        <path d="M3 9H12Q12 3 7 3Q2 3 2 9Q3 15 11 14" stroke="#ee5a24" />
        <path d="M14 14Q19 15 20 9Q21 3 25 4L28 3V14" stroke="#f07d1e" />
        <path d="M32 5V14" stroke="#f29a1c" />
      </svg>
    </AppMenu>
    <Toolbars>
      <ToolGroup $w={265}>
        <ToolRow>
          <DropKey aria-label="Filter"><Chevron /></DropKey>
          <ComboBox $w={34}>
            <select aria-label="Select by"><option>By</option></select>
            <DropKey aria-label="Open select by"><Chevron /></DropKey>
          </ComboBox>
          <ComboBox $w={52}><input aria-label="Entity kind" defaultValue="Basic Ent" /></ComboBox>
          <DropKey aria-label="Open entity kind"><Chevron /></DropKey>
          <Divider />
          <Tool name="plus" /><Tool name="cubes" />
          <Divider />
          <Tool name="cubeId" /><Tool name="cubeNo" /><Tool name="hand" on />
          <MoreMark />
        </ToolRow>
        <GroupLabel $pull>Selection</GroupLabel>
      </ToolGroup>
      <ToolGroup $w={141}>
        <ToolRow $grip>
          <ToolButton $on aria-label="Pick">
            <T><path d="M3 15V2H8Q11 2 11 5.500Q11 9 8 9H3" stroke="#3d4249" strokeWidth="2" /><path d="M10 8L16 14H13L14 17" stroke="#333" fill="#fff" /></T>
          </ToolButton>
          <Tri w={6} c="#24406f" />
          <Tool name="eye" /><Tool name="cubeEye" /><Tool name="cubeX" />
          <Divider />
          <Tool name="gear" />
          <MoreMark />
        </ToolRow>
        <GroupLabel>Visibility</GroupLabel>
      </ToolGroup>
      <Tools label="Utility" w={41} names={["ruler"]} />
      <Tools label="Mesh Visibility" w={83} names={["meshA", "meshB", "meshC"]} />
      <Tools label="Mesh Uti..." w={61} names={["meshSplit", "meshCheck"]} />
      <Tools label="Page" w={62} names={["prev", "next"]} />
      <Tools label="Cast" w={187} names={["down", "cube", "thermo", "ladle", "checks", "inspect", "play", "info"]} />
    </Toolbars>
    <Viewport>
      <OnCanvas $left={334} $top={51}><Model /></OnCanvas>
      <OnCanvas $left={0} $bottom={1}><Triad /></OnCanvas>
      <OnCanvas $left={484} $top={0}>
        <svg width="36" height="28" viewBox="0 0 36 28"><path d="M5 3L26 1" stroke="#b01616" strokeWidth="3" /><path d="M24 0H34L25 5Z" fill="#c41515" /><path d="M5 3L8 18" stroke="#0a0ab8" strokeWidth="3" /><path d="M2 16L14 15L9 27Z" fill="#0808c8" /></svg>
      </OnCanvas>
      <OnCanvas $right={2} $top={2}>
        <svg width="42" height="12" viewBox="0 0 42 12" fill="none" stroke="#eef3f6" strokeWidth="2"><path d="M1 10H11M16 2H24V10H16ZM31 1L40 11M40 1L31 11" /></svg>
      </OnCanvas>
      <OnCanvas $right={8} $bottom={0}><WindowTag>P1W1</WindowTag></OnCanvas>
    </Viewport>
    <Docks>
      <LogPane>
        <LogBody>
          <LogText>T successfully exported 002g.unf file.</LogText>
          <LogRail>
            <ScrollKey $w={17} aria-label="Log up"><Tri w={6} up /></ScrollKey>
            <ScrollKey $w={17} aria-label="Log down"><Tri w={6} /></ScrollKey>
          </LogRail>
        </LogBody>
        <HScroll>
          <HThumb />
          <Spacer />
          <ScrollKey $w={17} aria-label="Log right"><svg width="5" height="8" fill="none" stroke="#35568f" strokeWidth="2"><path d="M1 1L4 4L1 7" /></svg></ScrollKey>
        </HScroll>
      </LogPane>
      <PyPane>
        <PySide>
          <svg width="5" height="8" fill="none" stroke="#35568f" strokeWidth="1.500"><path d="M1 1L4 4L1 7" /></svg>
          <svg width="9" height="9" fill="none" stroke="#35568f"><path d="M.5 .5H8.500V8.500H.5ZM4.500 .5V8.500" /></svg>
        </PySide>
        <PyMain>
          <PyOutput>
            <div>{"Python 2.7.3 (default, Mar  3 2014, 17:32:27) [MSC v.1600 64 bit (AMD64)] on win32\n.>>>"}</div>
            <PyArrows><Tri w={6} up /><Tri w={6} /></PyArrows>
          </PyOutput>
          <PyInput>
            <input aria-label="Python command" />
            <ScrollKey $w={18} $h={21} aria-label="History"><Chevron /></ScrollKey>
          </PyInput>
        </PyMain>
      </PyPane>
    </Docks>
    <StatusBar><StatusCell /><StatusCell /></StatusBar>
  </AppWindow>
);

export default function App() {
  return (
    <Page>
      <Global />
      <TitleBar>
        <PhotoGlyph size={19} />
        <Title>QQ截图20170730122421 - Windows 照片查看器</Title>
        <WinButtons>
          <WinButton aria-label="Minimize"><svg width="14" height="8"><rect x=".5" y="2.500" width="13" height="4" fill="#fff" stroke="#44516a" /></svg></WinButton>
          <WinButton aria-label="Restore"><svg width="15" height="13" fill="#fff" stroke="#44516a"><path d="M5 .5H14.500V9H5Z" /><path d="M.5 4H10V12.500H.5Z" /><path d="M3.500 7H7V9.500H3.500Z" fill="#8ba1c0" /></svg></WinButton>
          <WinButton $close aria-label="Close"><svg width="14" height="12"><path d="M2 1L12 11M12 1L2 11" stroke="#5a2018" strokeWidth="4.500" /><path d="M2 1L12 11M12 1L2 11" stroke="#fff" strokeWidth="2.800" /></svg></WinButton>
        </WinButtons>
      </TitleBar>
      <MenuBar>
        <MenuItem>文件(F)<Tri /></MenuItem>
        <MenuItem>打印(P)<Tri /></MenuItem>
        <MenuItem>电子邮件(E)</MenuItem>
        <MenuItem>刻录(U)<Tri /></MenuItem>
        <MenuItem>打开(O)<Tri /></MenuItem>
        <Spacer />
        <button aria-label="Help">
          <svg width="20" height="20" viewBox="0 0 20 20"><circle cx="10" cy="10" r="9" fill="#2453b0" stroke="#a9bcdc" strokeWidth="1.500" /><path d="M7 8Q7 5 10 5Q13 5 13 8Q13 9.500 10 11V12.500M10 14V16" fill="none" stroke="#fff" strokeWidth="2" /></svg>
        </button>
      </MenuBar>
      <PhotoArea>
        <Photo>
          <PhotoRow>
            <LeftEdge>
              <EdgePanel $mt={110} $h={16} />
              <EdgePanel $mt={20} $h={20} />
              <EdgePanel $mt={196} />
              <EdgePanel $mt={4} $h={40} />
            </LeftEdge>
            <CalculationDialog />
            <MeshApp />
          </PhotoRow>
          <InnerTaskbar>
            {["#f0d48a", "#8fd08c", "#2f8be0", "#2ea8e8", "#76c2f2"].map((c) => <InnerTask key={c} $c={c} />)}
          </InnerTaskbar>
          <Cursor>
            <svg width="13" height="20" viewBox="0 0 13 20"><path d="M1 1V16L4.500 12.500L7 18.500L9.500 17.500L7 12H12Z" fill="#fff" stroke="#222" /></svg>
          </Cursor>
          <Ball $size={48} $top={200} $right={-29}>18</Ball>
          <Net w={120} h={50} top={23} right={41} rate="0.00K/s" count="0" size={11} gap={6} icon={38} />
          <Net w={103} h={44} top={323} right={85} rate="0.81K/s" count="1" size={10} gap={3} icon={33} />
        </Photo>
        <Ball $size={58} $top={160} $right={-36}>20</Ball>
      </PhotoArea>
      <ControlArea>
        <Pill>
          <PillSide>
            <IconButton aria-label="Zoom">
              <svg width="21" height="21" viewBox="0 0 21 21" fill="none" stroke="#1e55a8" strokeWidth="2.500"><circle cx="12.500" cy="8.500" r="6.500" fill="#dcebfa" /><path d="M8 13L1 20" strokeWidth="3.500" /><path d="M9.500 8.500H15.500M12.500 5.500V11.500" strokeWidth="1.800" /></svg>
              <Tri w={8} c="#1e4c94" />
            </IconButton>
            <IconButton aria-label="Fit">
              <svg width="20" height="18" viewBox="0 0 20 18" fill="#1e4c94"><path d="M5 5H15V13H5Z" fill="#dcebfa" stroke="#1e4c94" strokeWidth="2" /><path d="M8 0H12L10 3ZM8 18H12L10 15ZM0 7V11L3 9ZM20 7V11L17 9Z" /></svg>
            </IconButton>
          </PillSide>
          <NavGroup>
            <NavButton aria-label="Previous"><svg width="17" height="13" fill="#0f4fae"><path d="M0 0H4V13H0ZM17 0V13L6 6.500Z" /></svg></NavButton>
            <PlayRing aria-label="Slide show">
              <svg width="52" height="52" viewBox="0 0 52 52">
                <defs><linearGradient id="orb" x1="0" y1="0" x2="0" y2="1"><stop offset="0" stopColor="#d5d3f2" /><stop offset=".3" stopColor="#8a87d6" /><stop offset=".49" stopColor="#3c46b8" /><stop offset=".5" stopColor="#0a1a94" /><stop offset=".72" stopColor="#0d55c4" /><stop offset="1" stopColor="#5fe6ff" /></linearGradient></defs>
                <circle cx="26" cy="26" r="25" fill="url(#orb)" stroke="#14246f" />
                <rect x="12" y="15" width="28" height="23" rx="2" fill="#f3f5f7" />
                <path d="M16 19H36V34H16Z" fill="#bfe3ee" /><path d="M16 25Q22 24 26 28L36 30V34H16Z" fill="#4d8f70" />
              </svg>
            </PlayRing>
            <NavButton $next aria-label="Next"><svg width="17" height="13" fill="#0f4fae"><path d="M13 0H17V13H13ZM0 0V13L11 6.500Z" /></svg></NavButton>
          </NavGroup>
          <PillSide $end>
            <IconButton aria-label="Rotate left"><svg width="20" height="20" viewBox="0 0 20 20"><path d="M8 5Q16 5 16 12Q15 18 9 18Q5 18 4 15" fill="none" stroke="#1a4c9f" strokeWidth="3" /><path d="M9 0V10L2 5Z" fill="#1b7fd0" /></svg></IconButton>
            <IconButton aria-label="Rotate right"><svg width="20" height="20" viewBox="0 0 20 20"><path d="M12 5Q4 5 4 12Q5 18 11 18Q15 18 16 15" fill="none" stroke="#1a4c9f" strokeWidth="3" /><path d="M11 0V10L18 5Z" fill="#1b7fd0" /></svg></IconButton>
            <PillRule />
            <IconButton aria-label="Delete"><svg width="18" height="18" viewBox="0 0 18 18"><path d="M2 2L16 16M16 2L2 16" stroke="#d42a2a" strokeWidth="2.500" strokeLinecap="round" /></svg></IconButton>
          </PillSide>
        </Pill>
        <ImeBar>
          <ImeLogo><SogouLogo size={36} /></ImeLogo>
          {ime.map(([n, g]) => <ImeKey key={n} aria-label={n}>{g}</ImeKey>)}
        </ImeBar>
      </ControlArea>
      <Taskbar>
        {pinned.map(([n, w, g]) => <TaskIcon key={n} $w={w} aria-label={n}>{g}</TaskIcon>)}
        <ActiveTasks>
          {running.map(([n, g]) => <TaskIcon key={n} $w={67} $active aria-label={n}>{g}</TaskIcon>)}
        </ActiveTasks>
        <Spacer />
        <Tray>
          <TrayIcon $wide aria-label="Sogou"><SogouLogo size={22} /></TrayIcon>
          {tray.map(([n, g]) => <TrayIcon key={n} aria-label={n}>{g}</TrayIcon>)}
        </Tray>
        <Clock>18:40<br />2017/8/1 星期二</Clock>
        <ShowDesktop aria-label="Show desktop" />
      </Taskbar>
    </Page>
  );
}
